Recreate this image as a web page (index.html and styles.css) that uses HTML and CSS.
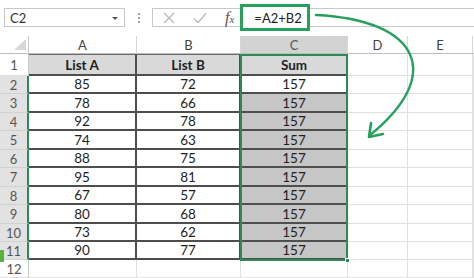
FILE: index.html
```html
<!DOCTYPE html>
<html>
<head>
<meta charset="utf-8">
<link rel="stylesheet" href="styles.css">
</head>
<body>
<div class="app">
  <div class="fbar">
    <div class="namebox"><span class="nb-text">C2</span><span class="caret"></span></div>
    <div class="dots"><i></i><i></i><i></i></div>
    <div class="formula">
      <svg class="ico ico-x" width="12" height="12" viewBox="0 0 12 12"><path d="M1 1L11 11M11 1L1 11" stroke="#b8b8b8" stroke-width="1.3" fill="none"/></svg>
      <svg class="ico ico-ok" width="14" height="12" viewBox="0 0 14 12"><path d="M1 6.5L5 10.5L13 1.5" stroke="#b8b8b8" stroke-width="1.3" fill="none"/></svg>
      <span class="fx">f<span class="fx-x">x</span></span>
      <div class="finput">=A2+B2</div>
    </div>
  </div>

  <div class="sheet">
    <div class="c corner"><span class="tri"></span></div>
    <div class="c ch">A</div><div class="c ch">B</div><div class="c ch ch-sel">C</div><div class="c ch">D</div><div class="c ch">E</div><div class="c ch ch-last"></div>

    <div class="c rh">1</div><div class="c t th">List A</div><div class="c t th">List B</div><div class="c t th tc">Sum</div><div class="c g"></div><div class="c g"></div><div class="c g"></div>

    <div class="c rh sel">2</div><div class="c t">85</div><div class="c t">72</div><div class="c t tc active">157</div><div class="c g"></div><div class="c g"></div><div class="c g"></div>
    <div class="c rh sel r19">3</div><div class="c t r19">78</div><div class="c t r19">66</div><div class="c t tc hl r19">157</div><div class="c g r19"></div><div class="c g r19"></div><div class="c g r19"></div>
    <div class="c rh sel">4</div><div class="c t">92</div><div class="c t">78</div><div class="c t tc hl">157</div><div class="c g"></div><div class="c g"></div><div class="c g"></div>
    <div class="c rh sel r19">5</div><div class="c t r19">74</div><div class="c t r19">63</div><div class="c t tc hl r19">157</div><div class="c g r19"></div><div class="c g r19"></div><div class="c g r19"></div>
    <div class="c rh sel">6</div><div class="c t">88</div><div class="c t">75</div><div class="c t tc hl">157</div><div class="c g"></div><div class="c g"></div><div class="c g"></div>
    <div class="c rh sel r19">7</div><div class="c t r19">95</div><div class="c t r19">81</div><div class="c t tc hl r19">157</div><div class="c g r19"></div><div class="c g r19"></div><div class="c g r19"></div>
    <div class="c rh sel">8</div><div class="c t">67</div><div class="c t">57</div><div class="c t tc hl">157</div><div class="c g"></div><div class="c g"></div><div class="c g"></div>
    <div class="c rh sel r19">9</div><div class="c t r19">80</div><div class="c t r19">68</div><div class="c t tc hl r19">157</div><div class="c g r19"></div><div class="c g r19"></div><div class="c g r19"></div>
    <div class="c rh sel">10</div><div class="c t">73</div><div class="c t">62</div><div class="c t tc hl">157</div><div class="c g"></div><div class="c g"></div><div class="c g"></div>
    <div class="c rh sel">11</div><div class="c t">90</div><div class="c t">77</div><div class="c t tc hl">157</div><div class="c g"></div><div class="c g"></div><div class="c g"></div>

    <div class="c rh">12</div><div class="c g"></div><div class="c g"></div><div class="c g"></div><div class="c g"></div><div class="c g"></div><div class="c g"></div>
  </div>

  <div class="selbox"><span class="handle"></span></div>
  <div class="edge-mark"></div>

  <svg class="arrow" width="474" height="278" viewBox="0 0 474 278">
    <path d="M316 15 C420 20 445 75 369 136" stroke="#27a05c" stroke-width="2.4" fill="none" stroke-linecap="round"/>
    <polyline points="371,123 369,137 383,134" stroke="#27a05c" stroke-width="2.6" fill="none" stroke-linecap="round" stroke-linejoin="round"/>
  </svg>
</div>
</body>
</html>
```

FILE: styles.css
```css
* { box-sizing: border-box; }
html, body { margin: 0; padding: 0; background: #fff; }
body { font-family: Lato, "Open Sans", sans-serif; font-size: 13px; color: #222; }

.app { position: relative; width: 474px; height: 278px; overflow: hidden; }

.fbar { height: 36px; display: flex; align-items: flex-start; padding-top: 8px; padding-left: 4px; }
.namebox { width: 121px; height: 19px; border: 1px solid #c8c8c8; display: flex; align-items: center; justify-content: space-between; padding: 0 6px 0 5px; color: #333; }
.caret { width: 0; height: 0; border-left: 3px solid transparent; border-right: 3px solid transparent; border-top: 3px solid #555; margin-top: 1px; }
.dots { width: 27px; height: 19px; display: flex; flex-direction: column; align-items: center; justify-content: center; gap: 2px; }
.dots i { display: block; width: 2px; height: 2px; background: #a0a0a0; }
.formula { flex: 1; height: 19px; border: 1px solid #c8c8c8; border-right: none; display: flex; align-items: center; padding-left: 10px; }
.ico { display: block; flex: none; }
.ico-x { margin-right: 18px; }
.ico-ok { margin-right: 18px; }
.fx { font-family: "Liberation Serif", serif; font-style: italic; font-size: 16px; color: #555; margin-right: 6px; line-height: 1; }
.fx-x { font-size: 11px; }
.finput { width: 70px; height: 27px; margin: -4px 0; border: 3px solid #27a05c; display: flex; align-items: center; padding-left: 11px; color: #222; background: #fff; }

.sheet { display: grid; grid-template-columns: 29px 108px 104px 107px 60px 65px 1fr; grid-template-rows: 18px 22px repeat(10, auto) 18px; }
.c { height: 18px; display: flex; align-items: center; justify-content: center; border-right: 1px solid #e1e1e1; border-bottom: 1px solid #e1e1e1; }
.r19 { height: 19px; }
.sheet > .c:nth-child(n+8):nth-child(-n+14) { height: 22px; }

.corner { border-right: 1px solid #c8c8c8; border-bottom: 1px solid #bdbdbd; justify-content: flex-end; align-items: flex-end; padding: 0 2px 3px 0; }
.tri { width: 0; height: 0; border-left: 12px solid transparent; border-bottom: 11px solid #d8d8d8; }
.ch { color: #444; border-right: 1px solid #d6d6d6; border-bottom: 1px solid #bdbdbd; }
.ch-sel { background: #d3d3d3; color: #555; }
.ch-last { border-right: none; }

.rh { color: #555; border-right: 1px solid #c8c8c8; border-bottom: 1px solid #dedede; }
.rh.sel { background: #e2e2e2; border-right: 2px solid #2b8a55; border-bottom: 1px solid #d0d0d0; }

.t { border-right: 2px solid #4e4e4e; border-bottom: 2px solid #4e4e4e; color: #1e1e1e; font-size: 13.5px; }
.th { background: #d9d9d9; font-weight: 700; border-top: 1px solid #6a6a6a; }
.tc { border-right: 1px solid #e1e1e1; }
.hl { background: #c6c6c6; }
.active { background: #fff; }
.g { background: #fff; }

.selbox { position: absolute; left: 240px; top: 54px; width: 108px; height: 207px; border: 2px solid #2b8a55; pointer-events: none; }
.handle { position: absolute; right: -4px; bottom: -4px; width: 5px; height: 5px; background: #2b8a55; border: 1px solid #fff; }
.edge-mark { position: absolute; left: 0; top: 250px; width: 4px; height: 12px; background: #5cb03c; }

.arrow { position: absolute; left: 0; top: 0; pointer-events: none; }
```
